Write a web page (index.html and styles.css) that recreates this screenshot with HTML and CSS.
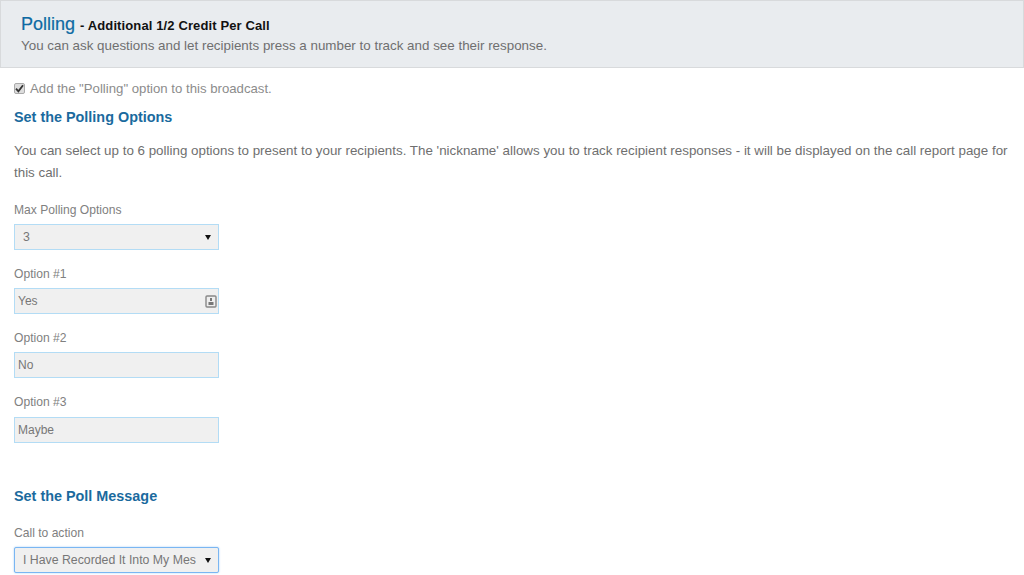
FILE: index.html
```html
<!DOCTYPE html>
<html lang="en">
<head>
    <meta charset="UTF-8">
    <title>Polling</title>
    <link rel="stylesheet" href="styles.css">
</head>
<body>
    <div class="banner">
        <h2><span class="banner-title">Polling</span> <span class="banner-sub">- Additional 1/2 Credit Per Call</span></h2>
        <p>You can ask questions and let recipients press a number to track and see their response.</p>
    </div>

    <div class="content">
        <label class="check-row">
            <span class="check-box">
                <svg width="9" height="9" viewBox="0 0 9 9"><path d="M1 4.6 L3.4 7.4 L8 1.2" fill="none" stroke="#333" stroke-width="1.8"/></svg>
            </span>
            Add the "Polling" option to this broadcast.
        </label>

        <h3 class="section-title">Set the Polling Options</h3>
        <p class="intro">You can select up to 6 polling options to present to your recipients. The 'nickname' allows you to track recipient responses - it will be displayed on the call report page for this call.</p>

        <div class="field">
            <label>Max Polling Options</label>
            <div class="control select-control"><span class="select-text">3</span><span class="arrow"></span></div>
        </div>
        <div class="field">
            <label>Option #1</label>
            <div class="control">
                <span>Yes</span>
                <svg class="contact-icon" width="12" height="13" viewBox="0 0 12 13">
                    <rect x="1" y="1" width="10" height="11" rx="1" fill="#eee" stroke="#888" stroke-width="1.4"/>
                    <rect x="5" y="3" width="2" height="3" fill="#777"/>
                    <rect x="3.5" y="7" width="5" height="3" fill="#777"/>
                </svg>
            </div>
        </div>
        <div class="field">
            <label>Option #2</label>
            <div class="control"><span>No</span></div>
        </div>
        <div class="field last-option">
            <label>Option #3</label>
            <div class="control"><span>Maybe</span></div>
        </div>

        <h3 class="section-title poll-title">Set the Poll Message</h3>

        <div class="field">
            <label>Call to action</label>
            <div class="control select-control focused"><span class="select-text">I Have Recorded It Into My Mes</span><span class="arrow"></span></div>
        </div>
    </div>
</body>
</html>
```

FILE: styles.css
```css
* {
    margin: 0;
    padding: 0;
    box-sizing: border-box;
}

body {
    font-family: "Liberation Sans", Arial, sans-serif;
    font-size: 12px;
    color: #777;
    background: #fff;
    height: 575px;
    overflow: hidden;
}

/* top banner */
.banner {
    height: 68px;
    padding: 13px 20px 0 20px;
    background: #e9ecef;
    border: 1px solid #d8dadc;
}

.banner h2 {
    font-weight: normal;
    line-height: 20px;
}

.banner-title {
    font-size: 18px;
    font-weight: normal;
    color: #0f6aa3;
    -webkit-text-stroke: 0.2px #0f6aa3;
}

.banner-sub {
    font-size: 13px;
    letter-spacing: 0.12px;
    font-weight: bold;
    color: #111;
}

.banner p {
    margin-top: 1px;
    font-size: 13.38px;
    line-height: 18px;
    color: #6f6f6f;
}

/* form */
.content {
    padding: 0 14px;
}

.check-row {
    display: flex;
    align-items: center;
    gap: 5px;
    margin-top: 12px;
    font-size: 13.2px;
    line-height: 17px;
    color: #8c8c8c;
}

.check-box {
    width: 11px;
    height: 11px;
    display: flex;
    align-items: center;
    justify-content: center;
    background: #ddd;
    border: 1px solid #aaa;
    border-radius: 2px;
}

.section-title {
    margin-top: 11px;
    font-size: 14.4px;
    line-height: 18px;
    font-weight: bold;
    color: #1a6a9e;
}

.intro {
    margin-top: 14px;
    margin-bottom: 18px;
    font-size: 13.36px;
    line-height: 22px;
    color: #6f6f6f;
}

.field {
    margin-top: 16px;
    width: 205px;
}

.field label {
    display: block;
    font-size: 12.1px;
    line-height: 16px;
    color: #808080;
}

.control {
    display: flex;
    align-items: center;
    justify-content: space-between;
    height: 26px;
    margin-top: 6px;
    padding: 0 1px 0 3px;
    background: #f0f0f0;
    border: 1px solid #b3dcf5;
    color: #777;
}

.last-option .control {
    margin-top: 7px;
}

.select-control {
    padding: 0 7px 0 8px;
}

.select-text {
    font-size: 12.3px;
    white-space: nowrap;
    overflow: hidden;
}

.arrow {
    flex: none;
    width: 0;
    height: 0;
    border-left: 3.5px solid transparent;
    border-right: 3.5px solid transparent;
    border-top: 5px solid #111;
}

.contact-icon {
    flex: none;
}

.poll-title {
    margin-top: 44px;
    margin-bottom: 20px;
}

.focused {
    border: 1px solid #7ab6f2;
    border-radius: 2px;
    box-shadow: 0 0 2px #9cc8f5;
}
```
